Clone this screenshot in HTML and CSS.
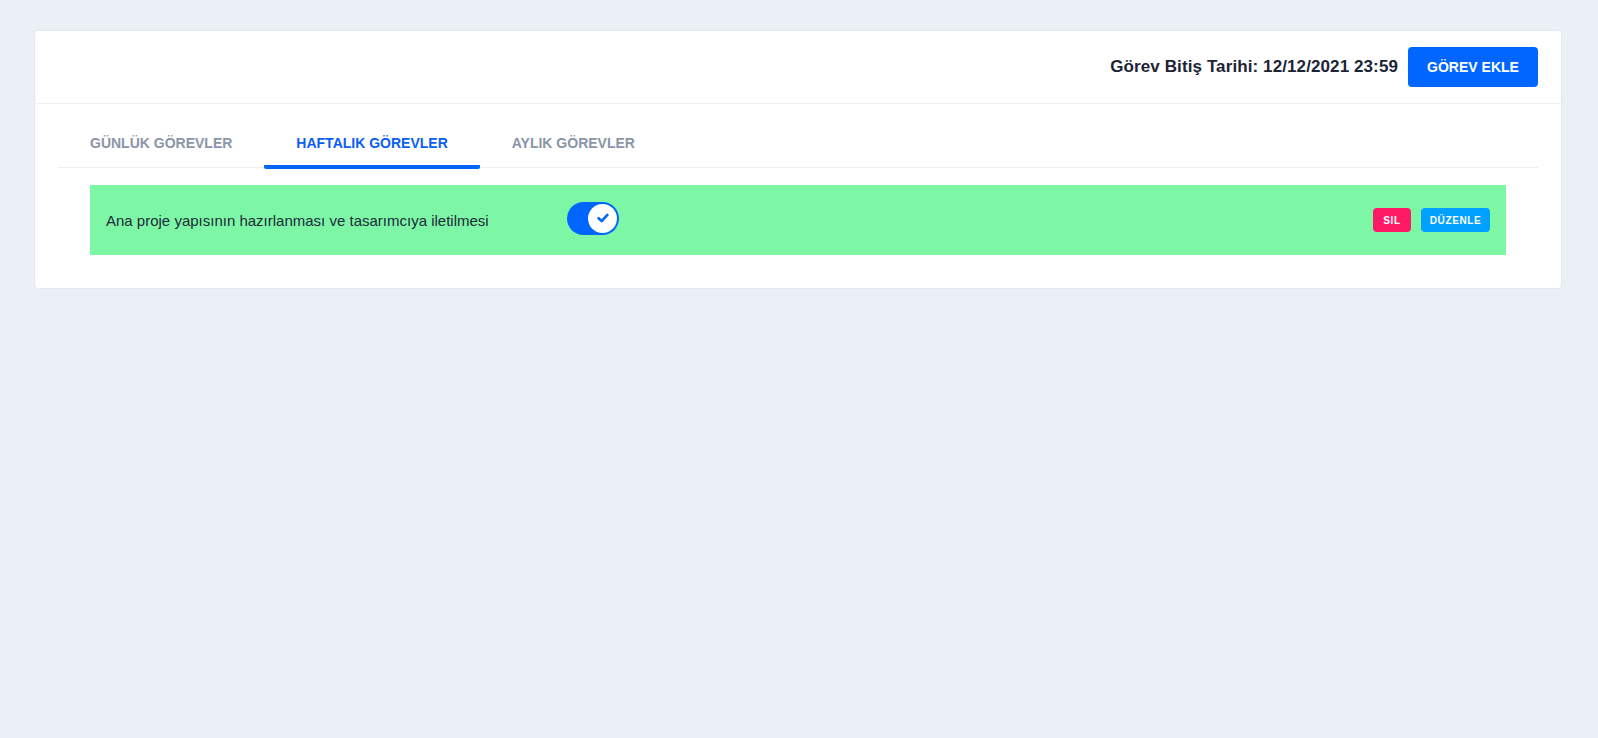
FILE: index.html
```html
<!DOCTYPE html>
<html lang="tr">
<head>
<meta charset="utf-8">
<title>Görevler</title>
<link rel="stylesheet" href="styles.css">
</head>
<body>
<div class="page">
  <div class="card">
    <div class="card-header">
      <span class="deadline">Görev Bitiş Tarihi: 12/12/2021 23:59</span>
      <button class="btn-add">GÖREV EKLE</button>
    </div>
    <div class="card-body">
      <div class="tabs">
        <div class="tab">GÜNLÜK GÖREVLER</div>
        <div class="tab active">HAFTALIK GÖREVLER</div>
        <div class="tab">AYLIK GÖREVLER</div>
      </div>
      <div class="task-list">
        <div class="task done">
          <span class="task-text">Ana proje yapısının hazırlanması ve tasarımcıya iletilmesi</span>
          <span class="toggle">
            <span class="knob">
              <svg width="16" height="16" viewBox="0 0 16 16"><path d="M3.6 8.2 L6.7 11.1 L12.4 4.9" fill="none" stroke="#0066ff" stroke-width="2.6" stroke-linecap="round" stroke-linejoin="round"/></svg>
            </span>
          </span>
          <span class="spacer"></span>
          <button class="btn-sm btn-del">SIL</button>
          <button class="btn-sm btn-edit">DÜZENLE</button>
        </div>
      </div>
    </div>
  </div>
</div>
</body>
</html>
```

FILE: styles.css
```css
html, body {
  margin: 0;
  padding: 0;
  background: #ebf0f7;
  font-family: "Liberation Sans", Arial, sans-serif;
}
.page {
  padding: 30px 36px 0 34px;
}
.card {
  background: #ffffff;
  border: 1px solid #e3e8f0;
  border-radius: 4px;
}
.card-header {
  display: flex;
  justify-content: flex-end;
  align-items: center;
  height: 72px;
  padding: 0 23px 0 24px;
  border-bottom: 1px solid #edf0f5;
}
.deadline {
  font-size: 17px;
  font-weight: bold;
  color: #1b2436;
  letter-spacing: 0.1px;
  margin-right: 10px;
}
.btn-add {
  background: #0066ff;
  color: #ffffff;
  border: none;
  border-radius: 4px;
  height: 40px;
  width: 130px;
  font-family: "Liberation Sans", Arial, sans-serif;
  font-weight: bold;
  font-size: 14px;
  padding: 0;
}
.card-body {
  padding: 0 23px 33px 23px;
}
.tabs {
  display: flex;
  border-bottom: 1px solid #eceff4;
  height: 63px;
  align-items: stretch;
}
.tab {
  padding: 16px 32px 0 32px;
  display: flex;
  align-items: center;
  box-sizing: border-box;
  font-size: 14px;
  font-weight: bold;
  color: #8a95a8;
  border-bottom: 4px solid transparent;
  margin-bottom: -2px;
}
.tab.active {
  color: #0a5ef5;
  border-bottom-color: #0066ff;
  border-radius: 2px;
}
.tab + .tab {
  margin-left: 0;
}
.task-list {
  padding: 17px 32px 0 32px;
}
.task {
  display: flex;
  align-items: center;
  height: 70px;
  padding: 0 16px;
  background: #7df7a6;
}
.task-text {
  font-size: 15px;
  color: #1e2a3a;
  width: 461px;
  flex: none;
}
.toggle {
  width: 52px;
  height: 33px;
  border-radius: 17px;
  background: #0066ff;
  display: flex;
  align-items: center;
  justify-content: flex-end;
  padding: 0 2px;
  box-sizing: border-box;
  margin-top: -4px;
}
.knob {
  width: 29px;
  height: 29px;
  border-radius: 50%;
  background: #ffffff;
  display: flex;
  align-items: center;
  justify-content: center;
}
.spacer {
  flex: 1;
}
.btn-sm {
  border: none;
  border-radius: 4px;
  height: 24px;
  color: #ffffff;
  font-family: "Liberation Sans", Arial, sans-serif;
  font-weight: bold;
  font-size: 10px;
  letter-spacing: 0.6px;
  padding: 0;
}
.btn-del {
  background: #ff1a66;
  width: 38px;
  margin-right: 10px;
}
.btn-edit {
  background: #00a0ff;
  width: 69px;
}
```
